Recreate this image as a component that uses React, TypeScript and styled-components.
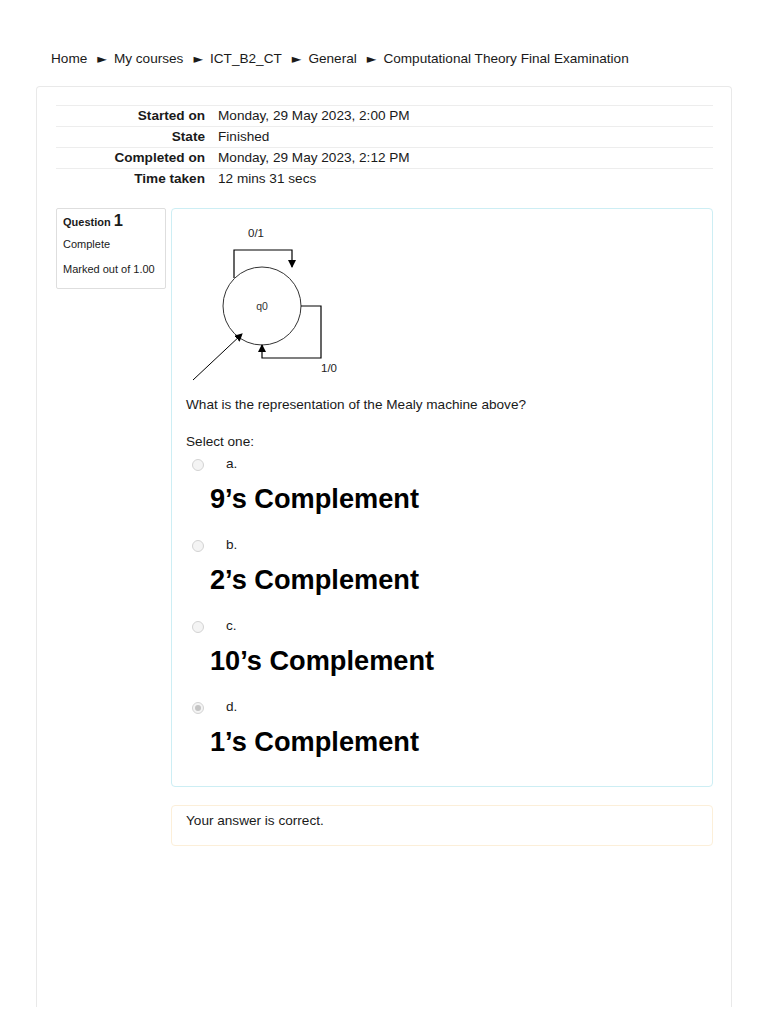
import React from "react";
import styled, { createGlobalStyle } from "styled-components";

const Global = createGlobalStyle`
  html, body { margin: 0; padding: 0; background: #fff; }
  body { font-family: "Liberation Sans", Arial, sans-serif; color: #1a1a1a; font-size: 13.6px; }
  * { box-sizing: border-box; }
`;

const Page = styled.div`
  width: 768px;
  height: 1024px;
  overflow: hidden;
  padding-top: 50px;
`;

const Crumbs = styled.nav`
  display: flex;
  align-items: center;
  padding-left: 51px;
  height: 18px;
  line-height: 18px;
  font-size: 13.6px;
  color: #1a1a1a;
`;

const Sep = styled.span`
  font-size: 12.5px;
  margin: 0 7px 0 10px;
  font-family: "DejaVu Sans", sans-serif;
`;

const Card = styled.div`
  margin: 18px 0 0 36px;
  width: 696px;
  height: 921px;
  border: 1px solid #e9e9e9;
  border-bottom: none;
  border-radius: 4px 4px 0 0;
  padding: 18px 18px 0 19px;
`;

const Summary = styled.table`
  width: 100%;
  border-collapse: collapse;
  font-size: 13.6px;
`;

const Row = styled.tr`
  height: 21px;
  border-top: 1px solid #ededed;
`;

const Th = styled.th`
  width: 155px;
  text-align: right;
  font-weight: bold;
  padding: 0 6px 0 0;
  line-height: 20px;
`;

const Td = styled.td`
  padding: 0 0 0 7px;
  line-height: 20px;
`;

const Question = styled.div`
  margin-top: 18px;
  display: grid;
  grid-template-columns: 110px 1fr;
  column-gap: 5px;
  row-gap: 18px;
  align-items: start;
`;

const Info = styled.div`
  border: 1px solid #dedede;
  border-radius: 2px;
  padding: 2px 6px 6px 6px;
  font-size: 11px;
  height: 81px;
`;

const QTitle = styled.div`
  font-weight: bold;
  font-size: 11px;
  line-height: 18px;
`;

const QNum = styled.span`
  font-size: 16.5px;
`;

const InfoLine = styled.div<{ $top: number }>`
  margin-top: ${(p) => p.$top}px;
  line-height: 14px;
`;

const Formulation = styled.div`
  border: 1px solid #cdeef4;
  border-radius: 4px;
  padding: 14px 14px 28px 14px;
  height: 579px;
`;

const Diagram = styled.svg`
  display: block;
  width: 170px;
  height: 164px;
`;

const Prompt = styled.p`
  margin: 9px 0 0 0;
  line-height: 18px;
  font-size: 13.6px;
`;

const SelectOne = styled.div`
  margin-top: 19px;
  line-height: 18px;
`;

const Option = styled.div<{ $first?: boolean }>`
  margin-top: ${(p) => (p.$first ? 4 : 21)}px;
`;

const OptionHead = styled.div`
  display: flex;
  align-items: center;
  height: 18px;
  padding-left: 6px;
`;

const Radio = styled.span<{ $checked?: boolean }>`
  width: 12px;
  height: 12px;
  border-radius: 50%;
  border: 1px solid #d3d3d3;
  background: #f4f4f4;
  display: inline-flex;
  align-items: center;
  justify-content: center;
  margin-top: 2px;
  &::after {
    content: "";
    width: 6px;
    height: 6px;
    border-radius: 50%;
    background: ${(p) => (p.$checked ? "#c4c4c4" : "transparent")};
  }
`;

const Letter = styled.span`
  margin-left: 22px;
  font-size: 13.6px;
`;

const Answer = styled.div`
  margin: 10px 0 0 24px;
  font-size: 27.2px;
  font-weight: bold;
  line-height: 32px;
  color: #000;
`;

const Feedback = styled.div`
  grid-column: 2;
  border: 1px solid #fcefd9;
  border-radius: 4px;
  padding: 6px 14px;
  height: 41px;
  line-height: 18px;
`;

const crumbs = ["Home", "My courses", "ICT_B2_CT", "General", "Computational Theory Final Examination"];

const summary: [string, string][] = [
  ["Started on", "Monday, 29 May 2023, 2:00 PM"],
  ["State", "Finished"],
  ["Completed on", "Monday, 29 May 2023, 2:12 PM"],
  ["Time taken", "12 mins 31 secs"],
];

const options = [
  { l: "a.", t: "9’s Complement" },
  { l: "b.", t: "2’s Complement" },
  { l: "c.", t: "10’s Complement" },
  { l: "d.", t: "1’s Complement", checked: true },
];

const MealyDiagram = () => (
  <Diagram viewBox="0 0 170 164">
    <defs>
      <marker id="ah" markerWidth="8" markerHeight="8" refX="7" refY="4" orient="auto" markerUnits="userSpaceOnUse">
        <path d="M0,0 L8,4 L0,8 z" fill="#000" />
      </marker>
    </defs>
    <text x="70" y="14" fontSize="11.5" textAnchor="middle" fontFamily="Liberation Sans, Arial, sans-serif" fill="#222">0/1</text>
    <polyline points="48,55 48,27 106,27 106,44" fill="none" stroke="#000" strokeWidth="1.2" markerEnd="url(#ah)" />
    <ellipse cx="76" cy="83" rx="39" ry="39" fill="none" stroke="#333" strokeWidth="1" />
    <text x="76" y="87" fontSize="10.5" textAnchor="middle" fontFamily="Liberation Sans, Arial, sans-serif" fill="#333">q0</text>
    <polyline points="115,83 135,83 135,135 76,135 76,122" fill="none" stroke="#000" strokeWidth="1.2" markerEnd="url(#ah)" />
    <text x="143" y="149" fontSize="11.5" textAnchor="middle" fontFamily="Liberation Sans, Arial, sans-serif" fill="#222">1/0</text>
    <line x1="7" y1="157" x2="56" y2="111" stroke="#000" strokeWidth="1" markerEnd="url(#ah)" />
  </Diagram>
);

export default function App() {
  return (
    <Page>
      <Global />
      <Crumbs>
        {crumbs.map((c, i) => (
          <React.Fragment key={c}>
            {i > 0 && <Sep>►</Sep>}
            <span>{c}</span>
          </React.Fragment>
        ))}
      </Crumbs>
      <Card>
        <Summary>
          <tbody>
            {summary.map(([k, v]) => (
              <Row key={k}>
                <Th>{k}</Th>
                <Td>{v}</Td>
              </Row>
            ))}
          </tbody>
        </Summary>
        <Question>
          <Info>
            <QTitle>
              Question <QNum>1</QNum>
            </QTitle>
            <InfoLine $top={6}>Complete</InfoLine>
            <InfoLine $top={11}>Marked out of 1.00</InfoLine>
          </Info>
          <Formulation>
            <MealyDiagram />
            <Prompt>What is the representation of the Mealy machine above?</Prompt>
            <SelectOne>Select one:</SelectOne>
            {options.map((o, i) => (
              <Option key={o.l} $first={i === 0}>
                <OptionHead>
                  <Radio $checked={o.checked} />
                  <Letter>{o.l}</Letter>
                </OptionHead>
                <Answer>{o.t}</Answer>
              </Option>
            ))}
          </Formulation>
          <Feedback>Your answer is correct.</Feedback>
        </Question>
      </Card>
    </Page>
  );
}
